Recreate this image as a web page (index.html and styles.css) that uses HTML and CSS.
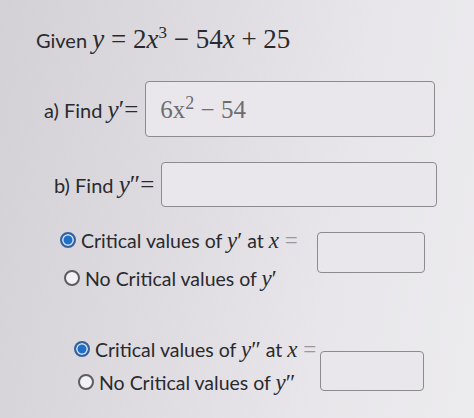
FILE: index.html
```html
<!DOCTYPE html>
<html lang="en">
<head>
  <meta charset="UTF-8" />
  <title>Derivatives</title>
  <link rel="stylesheet" href="styles.css">
</head>
<body>
  <div class="question">
    <div class="given">
      Given <span class="math"><i>y</i> = 2<i>x</i><sup>3</sup> − 54<i>x</i> + 25</span>
    </div>

    <div class="find-row row-a">
      <span class="label">a) Find <span class="math"><i>y</i>′=</span></span>
      <div class="answer big">
        <span class="entry">6x<sup>2</sup> − 54</span>
      </div>
    </div>

    <div class="find-row row-b">
      <span class="label">b) Find <span class="math"><i>y</i>″=</span></span>
      <div class="answer mid"></div>
    </div>

    <div class="choice-group group-1">
      <div class="options">
        <label class="option">
          <span class="radio checked"></span>
          <span class="text">Critical values of <span class="math"><i>y</i>′</span> at <span class="math"><i>x</i> <span class="eq">=</span></span></span>
        </label>
        <label class="option second">
          <span class="radio"></span>
          <span class="text">No Critical values of <span class="math"><i>y</i>′</span></span>
        </label>
      </div>
      <div class="answer small"></div>
    </div>

    <div class="choice-group group-2">
      <div class="options">
        <label class="option">
          <span class="radio checked"></span>
          <span class="text">Critical values of <span class="math"><i>y</i>″</span> at <span class="math"><i>x</i> <span class="eq">=</span></span></span>
        </label>
        <label class="option second">
          <span class="radio"></span>
          <span class="text">No Critical values of <span class="math"><i>y</i>″</span></span>
        </label>
      </div>
      <div class="answer small"></div>
    </div>
  </div>
</body>
</html>
```

FILE: styles.css
```css
body {
  margin: 0;
  width: 474px;
  height: 418px;
  overflow: hidden;
  font-family: "Lato", "Open Sans", sans-serif;
  color: #2a2a2e;
  background: linear-gradient(100deg, #d3d1d6 0%, #dddbe0 35%, #e8e6ea 70%, #ecebee 100%);
}
.question {
  display: flex;
  flex-direction: column;
  padding-top: 24px;
}
.math {
  font-family: "Liberation Serif", "DejaVu Serif", serif;
  font-size: 25px;
  line-height: 1;
}
.math sup {
  font-size: 16px;
}
.given {
  margin-left: 36px;
  font-size: 20px;
  height: 30px;
}
.given .math {
  font-size: 27px;
}
.given .math sup {
  font-size: 17px;
}
.find-row {
  display: flex;
  align-items: center;
  font-size: 20px;
}
.find-row .label {
  margin-right: 7px;
}
.row-a {
  margin-top: 27px;
  margin-left: 44px;
}
.row-b {
  margin-top: 25px;
  margin-left: 54px;
}
.answer {
  border: 1.5px solid #8c8b90;
  border-radius: 4px;
  background: #e9e7eb;
  box-sizing: border-box;
  flex: none;
}
.answer.big {
  width: 290px;
  height: 56px;
  display: flex;
  align-items: center;
  padding-left: 14px;
}
.answer.mid {
  width: 276px;
  height: 45px;
}
.answer.small {
  width: 108px;
  height: 41px;
}
.entry {
  font-family: "Liberation Serif", serif;
  font-size: 25px;
  color: #6e6d72;
}
.entry sup {
  font-size: 18px;
}
.choice-group {
  display: flex;
  align-items: flex-start;
}
.group-1 {
  margin-top: 19px;
  margin-left: 60px;
}
.group-2 {
  margin-top: 43px;
  margin-left: 74px;
}
.options {
  display: flex;
  flex-direction: column;
}
.option {
  display: flex;
  align-items: center;
  gap: 5px;
  height: 28px;
  white-space: nowrap;
}
.option .text {
  font-size: 19.5px;
}
.option .math {
  font-size: 23px;
}
.option.second {
  margin-top: 10px;
  margin-left: 4px;
}
.group-2 .option.second {
  margin-top: 5px;
}
.eq {
  color: #9a999e;
}
.radio {
  width: 12px;
  height: 12px;
  border-radius: 50%;
  border: 2px solid #5d5c62;
  background: #f2f1f3;
  flex: none;
}
.radio.checked {
  border: 2px solid #3a5f9a;
  background: #1e6fc8;
  box-shadow: inset 0 0 0 1.5px #d8e6f6;
}
.group-1 .answer.small {
  margin-left: 19px;
  margin-top: 6px;
}
.group-2 .answer.small {
  margin-left: 4px;
  margin-top: 16px;
  width: 104px;
  height: 40px;
}
```
